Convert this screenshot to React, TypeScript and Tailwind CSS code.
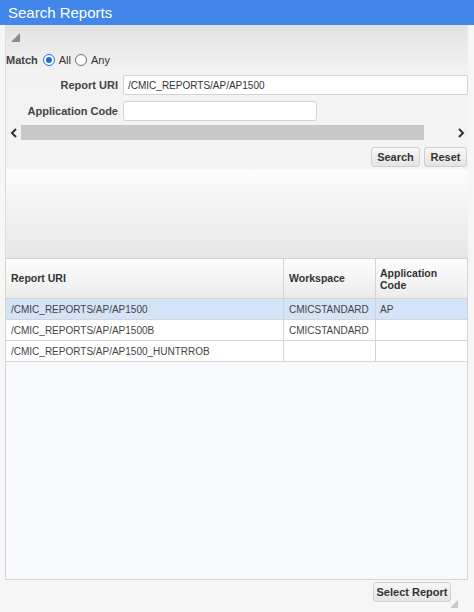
import React from "react";

function Radio({ checked }: { checked?: boolean }) {
  return (
    <span
      className={`inline-flex h-[12px] w-[12px] items-center justify-center rounded-full border bg-white ${checked ? "border-[#1a6fd8]" : "border-[#6b6b6b]"}`}
    >
      {checked ? <span className="h-[6px] w-[6px] rounded-full bg-[#1a6fd8]" /> : null}
    </span>
  );
}

export default function App() {
  const rows = [
    { uri: "/CMIC_REPORTS/AP/AP1500", ws: "CMICSTANDARD", code: "AP", sel: true },
    { uri: "/CMIC_REPORTS/AP/AP1500B", ws: "CMICSTANDARD", code: "", sel: false },
    { uri: "/CMIC_REPORTS/AP/AP1500_HUNTRROB", ws: "", code: "", sel: false },
  ];
  return (
    <div
      className="flex h-[612px] w-[474px] flex-col overflow-hidden bg-[#f6f6f6] text-[11px] text-[#333]"
      style={{ fontFamily: '"Liberation Sans", Arial, sans-serif' }}
    >
      <div className="h-[25px] shrink-0 bg-[#4286ea] pl-[8px] text-[15px] leading-[25px] text-white">
        Search Reports
      </div>
      <div className="flex flex-1 flex-col pl-[5px] pr-[6px]">
        {/* search panel */}
        <div className="flex flex-col border-l border-[#dcdcdc] bg-[linear-gradient(#e2e2e2,#f2f2f2_45px,#f6f6f6)]">
          <div className="flex h-[25px] items-center pl-[5px]">
            <svg width="10" height="10" viewBox="0 0 10 10">
              <polygon points="9,0 9,9 0,9" fill="#8a8a8a" />
            </svg>
          </div>
          <div className="flex h-[20px] items-center">
            <span className="font-bold text-[#444]">Match</span>
            <span className="ml-[5px] flex items-center gap-[4px]">
              <Radio checked />
              <span>All</span>
            </span>
            <span className="ml-[4px] flex items-center gap-[4px]">
              <Radio />
              <span>Any</span>
            </span>
          </div>
          <div className="mt-[5px] flex h-[20px] items-center">
            <span className="w-[112px] text-right font-bold text-[#444]">Report URI</span>
            <div className="ml-[5px] flex h-[20px] flex-1 items-center rounded-[2px] border border-[#d2d2d2] bg-white px-[4px] text-[10px]">
              /CMIC_REPORTS/AP/AP1500
            </div>
          </div>
          <div className="mt-[6px] flex h-[20px] items-center">
            <span className="w-[112px] text-right font-bold text-[#444]">Application Code</span>
            <div className="ml-[5px] h-[20px] w-[194px] rounded-[3px] border border-[#d2d2d2] bg-white" />
          </div>
          <div className="mt-[4px] flex h-[15px] items-center">
            <span className="flex w-[15px] items-center justify-center">
              <svg width="8" height="10" viewBox="0 0 8 10">
                <polyline points="6,1 2,5 6,9" fill="none" stroke="#333" strokeWidth="2" />
              </svg>
            </span>
            <div className="h-full w-[403px] bg-[#c8c8c8]" />
            <div className="h-full flex-1" />
            <span className="flex w-[15px] items-center justify-center">
              <svg width="8" height="10" viewBox="0 0 8 10">
                <polyline points="2,1 6,5 2,9" fill="none" stroke="#333" strokeWidth="2" />
              </svg>
            </span>
          </div>
          <div className="mt-[7px] flex justify-end gap-[4px] pr-[1px]">
            <button className="h-[20px] w-[49px] whitespace-nowrap rounded-[3px] border border-[#d0d0d0] bg-[linear-gradient(#f7f7f7,#e4e4e4)] text-[11px] font-bold text-[#333]">
              Search
            </button>
            <button className="h-[20px] w-[43px] whitespace-nowrap rounded-[3px] border border-[#d0d0d0] bg-[linear-gradient(#f7f7f7,#e4e4e4)] text-[11px] font-bold text-[#333]">
              Reset
            </button>
          </div>
          <div className="mt-[3px] h-[88px] bg-[linear-gradient(#fcfcfc,#e6e6e6)]" />
        </div>
        {/* table */}
        <div className="flex flex-1 flex-col border border-[#d4d4d4] bg-[#f8f9fc]">
          <div className="grid h-[39px] grid-cols-[278px_92px_1fr] bg-[linear-gradient(#fdfdfd,#ececec)] text-[10.5px] font-bold text-[#333]">
            <div className="flex items-center border-r border-[#d4d4d4] pl-[5px]">Report URI</div>
            <div className="flex items-center border-r border-[#d4d4d4] pl-[5px]">Workspace</div>
            <div className="flex items-center pl-[4px] leading-[12px]">
              Application
              <br />
              Code
            </div>
          </div>
          {rows.map((r, i) => (
            <div
              key={i}
              className={`grid h-[21px] grid-cols-[278px_92px_1fr] border-t border-[#d4d4d4] text-[10px] text-[#444] ${r.sel ? "bg-[#d3e3f8]" : "bg-white"}`}
            >
              <div className="flex items-center border-r border-[#d4d4d4] pl-[5px]">{r.uri}</div>
              <div className="flex items-center border-r border-[#d4d4d4] pl-[5px]">{r.ws}</div>
              <div className="flex items-center pl-[4px]">{r.code}</div>
            </div>
          ))}
          <div className="flex-1 border-t border-[#d4d4d4]" />
        </div>
        <div className="relative flex h-[32px] shrink-0 items-start justify-end pr-[17px] pt-[2px]">
          <button className="h-[20px] w-[78px] whitespace-nowrap rounded-[3px] border border-[#d0d0d0] bg-[linear-gradient(#f7f7f7,#e4e4e4)] text-[11px] font-bold text-[#333]">
            Select Report
          </button>
          <svg className="absolute bottom-[4px] right-[10px]" width="8" height="8" viewBox="0 0 8 8">
            <polygon points="8,0 8,8 0,8" fill="#c8c8c8" />
          </svg>
        </div>
      </div>
    </div>
  );
}
